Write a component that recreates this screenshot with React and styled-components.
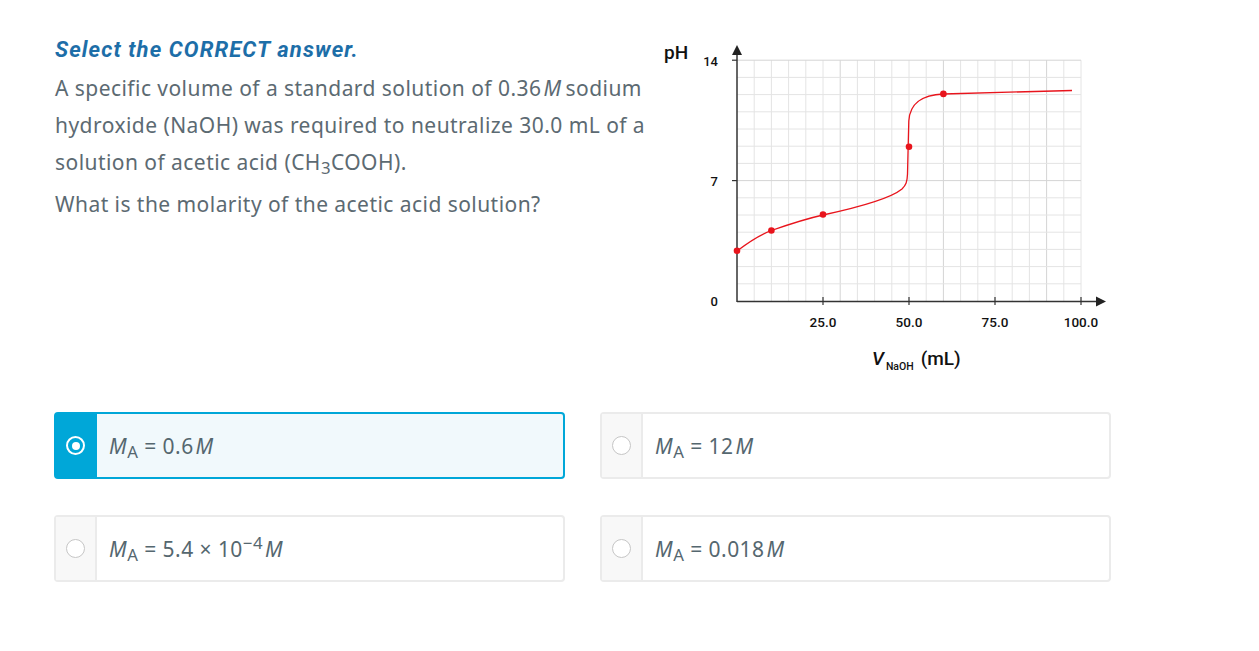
import React from 'react';
import styled, { createGlobalStyle } from 'styled-components';

const GlobalStyle = createGlobalStyle`
  html, body {
    margin: 0;
    padding: 0;
    background: #ffffff;
  }
  body {
    font-family: "Noto Sans", "Open Sans", sans-serif;
  }
`;

const Page = styled.div`
  width: 1259px;
  padding: 32px 0 0 54px;
  box-sizing: border-box;
`;

const Top = styled.div`
  display: flex;
  align-items: flex-start;
`;

const Question = styled.div`
  width: 600px;
  padding-left: 1px;
`;

const Title = styled.div`
  font-family: Roboto, "Liberation Sans", sans-serif;
  font-weight: 700;
  font-style: italic;
  font-size: 22px;
  line-height: 36px;
  color: #1d6ea8;
  letter-spacing: 1.1px;
`;

const Para = styled.p`
  margin: ${(p) => (p.$gap ? '5px' : '2px')} 0 0;
  font-size: 21px;
  line-height: 37px;
  color: #5c6a72;
  letter-spacing: 0.45px;
`;

const Var = styled.i`
  font-style: italic;
  margin: 0 4px 0 2px;
`;

const Sub = styled.sub`
  font-size: 0.8em;
  line-height: 0;
  vertical-align: -0.25em;
`;

const Chart = styled.svg`
  display: block;
  flex: none;
  margin-top: 3px;
  font-family: Roboto, "Liberation Sans", sans-serif;
`;

const Options = styled.div`
  display: grid;
  grid-template-columns: 511px 511px;
  column-gap: 35px;
  row-gap: 36px;
  align-items: start;
  margin-top: 32px;
`;

const Card = styled.div`
  display: flex;
  align-items: stretch;
  border: 2px solid ${(p) => (p.$selected ? '#00a7d8' : '#ebebeb')};
  border-radius: 4px;
  background: ${(p) => (p.$selected ? '#f1f9fc' : '#ffffff')};
  min-height: 63px;
`;

const Strip = styled.div`
  width: 39px;
  flex: none;
  display: flex;
  align-items: center;
  justify-content: center;
  background: ${(p) => (p.$selected ? '#00a7d8' : '#f8f8f8')};
  border-right: 2px solid ${(p) => (p.$selected ? '#00a7d8' : '#ebebeb')};
`;

const Radio = styled.span`
  width: 19px;
  height: 19px;
  box-sizing: border-box;
  border-radius: 50%;
  border: ${(p) => (p.$selected ? '2px solid #ffffff' : '1px solid #c6c6c6')};
  background: ${(p) => (p.$selected ? 'transparent' : '#ffffff')};
  display: flex;
  align-items: center;
  justify-content: center;

  &::after {
    content: '';
    display: ${(p) => (p.$selected ? 'block' : 'none')};
    width: 8px;
    height: 8px;
    border-radius: 50%;
    background: #ffffff;
  }
`;

const Answer = styled.div`
  display: flex;
  align-items: center;
  padding: 18px 12px;
  font-size: 21px;
  line-height: 26px;
  color: #55676f;
  letter-spacing: 0.45px;
`;

const Sup = styled.sup`
  font-size: 0.8em;
  line-height: 0;
  vertical-align: 0.5em;
`;

// chart coordinates: origin (82, 266), 3.44px per mL, 17.2px per pH unit
const X0 = 82;
const Y0 = 266;
const xs = (v) => X0 + v * 3.44;
const ys = (p) => Y0 - p * 17.2;

const TitrationChart = () => {
  const vLines = [];
  for (let v = 5; v <= 100; v += 5) vLines.push(v);
  const hLines = [];
  for (let p = 1; p <= 14; p += 1) hLines.push(p);
  const dots = [
    [0, 2.92],
    [10, 4.1],
    [25, 5.03],
    [50, 8.97],
    [60, 12.04],
  ];

  return (
    <Chart width="455" height="345" viewBox="0 0 455 345">
      {vLines.map((v) => (
        <line key={'v' + v} x1={xs(v)} y1={ys(14)} x2={xs(v)} y2={Y0} stroke={v % 30 === 0 ? '#d4d4d4' : '#e4e4e4'} strokeWidth="1" />
      ))}
      {hLines.map((p) => (
        <line key={'h' + p} x1={X0} y1={ys(p)} x2={xs(100)} y2={ys(p)} stroke={p % 7 === 0 ? '#d4d4d4' : '#e4e4e4'} strokeWidth="1" />
      ))}

      <line x1={X0} y1={Y0 + 0.5} x2={443} y2={Y0 + 0.5} stroke="#333" strokeWidth="1.5" />
      <polygon points="441,261.5 451,266.5 441,271.5" fill="#222" />
      <line x1={X0} y1={Y0 + 1} x2={X0} y2={18} stroke="#333" strokeWidth="1.5" />
      <polygon points="77,20 82,10 87,20" fill="#222" />

      {[25, 50, 75, 100].map((v) => (
        <line key={'t' + v} x1={xs(v)} y1={Y0 - 4} x2={xs(v)} y2={Y0 + 4} stroke="#333" strokeWidth="1.2" />
      ))}
      {[7, 14].map((p) => (
        <line key={'ty' + p} x1={X0 - 5} y1={ys(p)} x2={X0} y2={ys(p)} stroke="#333" strokeWidth="1.2" />
      ))}

      <text x="9" y="24" fontSize="19" fontWeight="500" fill="#111">pH</text>
      <text x="63" y="31" fontSize="13" fontWeight="500" fill="#111" textAnchor="end">14</text>
      <text x="63" y="151" fontSize="13" fontWeight="500" fill="#111" textAnchor="end">7</text>
      <text x="63" y="271" fontSize="13" fontWeight="500" fill="#111" textAnchor="end">0</text>

      {[25, 50, 75, 100].map((v) => (
        <text key={'l' + v} x={xs(v)} y="292" fontSize="13.5" fontWeight="500" fill="#111" textAnchor="middle">
          {v.toFixed(1)}
        </text>
      ))}

      <text x="217" y="330" fontSize="19" fontWeight="500" fill="#111">
        <tspan fontStyle="italic">V</tspan>
        <tspan fontSize="10.5" dy="5" dx="2">NaOH</tspan>
        <tspan dy="-5" dx="7">(mL)</tspan>
      </text>

      <path
        d="M82,216 C95,206 104,200 116.4,195.5 C135,189 150,184 168,180 C205,172 236,163 247,154 C251,150 252.2,147 252.5,139 L253.8,86 C255,67 268,60 288.4,59 L417,55.5"
        fill="none"
        stroke="#e8141c"
        strokeWidth="1.3"
      />
      {dots.map(([v, p]) => (
        <circle key={'d' + v} cx={xs(v)} cy={ys(p)} r="3.3" fill="#e8141c" />
      ))}
    </Chart>
  );
};

const MA = () => (
  <>
    <Var style={{ margin: 0 }}>M</Var>
    <Sub>A</Sub>
  </>
);

const options = [
  { key: 'a', selected: true, body: <>= 0.6<Var>M</Var></> },
  { key: 'b', selected: false, body: <>= 12<Var>M</Var></> },
  { key: 'c', selected: false, body: <>= 5.4 × 10<Sup>−4</Sup><Var>M</Var></> },
  { key: 'd', selected: false, body: <>= 0.018<Var>M</Var></> },
];

export default function App() {
  return (
    <Page>
      <GlobalStyle />
      <Top>
        <Question>
          <Title>Select the CORRECT answer.</Title>
          <Para>
            A specific volume of a standard solution of 0.36<Var>M</Var>sodium hydroxide (NaOH) was required to
            neutralize 30.0 mL of a solution of acetic acid (CH<Sub>3</Sub>COOH).
          </Para>
          <Para $gap>What is the molarity of the acetic acid solution?</Para>
        </Question>
        <TitrationChart />
      </Top>
      <Options>
        {options.map((o) => (
          <Card key={o.key} $selected={o.selected}>
            <Strip $selected={o.selected}>
              <Radio $selected={o.selected} />
            </Strip>
            <Answer>
              <span>
                <MA /> {o.body}
              </span>
            </Answer>
          </Card>
        ))}
      </Options>
    </Page>
  );
}
